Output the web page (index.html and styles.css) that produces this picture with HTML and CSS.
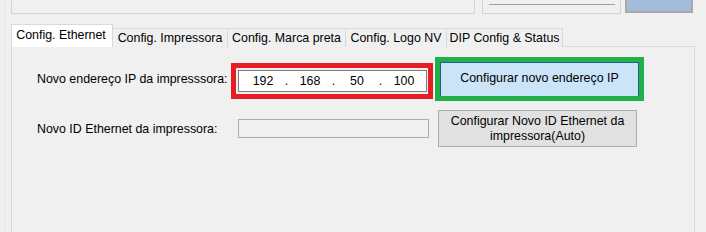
FILE: index.html
```html
<!DOCTYPE html>
<html lang="pt">
<head>
    <meta charset="UTF-8">
    <title>Config. Ethernet</title>
    <link rel="stylesheet" href="styles.css">
</head>
<body>
    <div class="window">
        <div class="top-strip">
            <div class="group-a"></div>
            <div class="group-b"><div class="group-b-field"></div></div>
            <div class="top-btn"></div>
        </div>

        <div class="tabs">
            <div class="tab active" style="width: 102px">Config. Ethernet</div>
            <div class="tab" style="width: 116px">Config. Impressora</div>
            <div class="tab" style="width: 119px">Config. Marca preta</div>
            <div class="tab" style="width: 102px">Config. Logo NV</div>
            <div class="tab" style="width: 117px">DIP Config &amp; Status</div>
        </div>

        <div class="panel">
            <div class="row row-ip">
                <div class="label">Novo endereço IP da impresssora:</div>
                <div class="mark-red">
                    <div class="ip-box">
                        <span class="seg">192</span><span class="dot">.</span>
                        <span class="seg">168</span><span class="dot">.</span>
                        <span class="seg">50</span><span class="dot">.</span>
                        <span class="seg">100</span>
                    </div>
                </div>
                <div class="mark-green">
                    <button class="btn btn-focus">Configurar novo endereço IP</button>
                </div>
            </div>

            <div class="row row-id">
                <div class="label">Novo ID Ethernet da impressora:</div>
                <div class="id-box"></div>
                <button class="btn btn-id">Configurar Novo ID Ethernet da<br>impressora(Auto)</button>
            </div>
        </div>
    </div>
</body>
</html>
```

FILE: styles.css
```css
body {
    margin: 0;
    background: #f0f0f0;
    font-family: "Liberation Sans", Arial, sans-serif;
    font-size: 12.4px;
    color: #000;
}
.window {
    width: 706px;
    height: 232px;
    overflow: hidden;
    border-left: 1px solid #f0f0f0;
    box-shadow: inset 3px 0 0 #f0f0f0, inset 4px 0 0 #e6e6e6;
}
.top-strip {
    display: flex;
    height: 14px;
}
.group-a {
    margin-left: 10px;
    width: 462px;
    border: 1px solid #d5d5d5;
    border-top: none;
}
.group-b {
    margin-left: 7px;
    width: 137px;
    border: 1px solid #d5d5d5;
    border-top: none;
}
.group-b-field {
    height: 4px;
    margin: 0 5px 0 6px;
    border-bottom: 1px solid #a0a0a0;
}
.top-btn {
    margin-left: 4px;
    width: 64px;
    height: 11px;
    background: #a3bcd9;
    border: 2px solid #a9a9a9;
    border-top: none;
}
.tabs {
    display: flex;
    align-items: flex-end;
    margin: 10px 0 0 10px;
    height: 23px;
    position: relative;
    z-index: 1;
}
.tab {
    box-sizing: border-box;
    height: 19px;
    line-height: 18px;
    text-align: center;
    background: #f0f0f0;
    border: 1px solid #d9d9d9;
    border-bottom: none;
    margin-left: -1px;
    white-space: nowrap;
}
.tab.active {
    height: 23px;
    line-height: 21px;
    margin-left: 0;
    background: #fff;
    padding-right: 2px;
}
.panel {
    box-sizing: border-box;
    margin: -1px 0 0 10px;
    width: 684px;
    height: 200px;
    border: 1px solid #d9d9d9;
    background: #f0f0f0;
    padding: 10px 0 0 25px;
}
.row {
    display: flex;
    align-items: center;
}
.row-ip {
    height: 44px;
}
.row-id {
    margin-top: 9px;
    height: 37px;
}
.label {
    width: 194px;
    white-space: nowrap;
}
.mark-red {
    border: 5px solid #e51d25;
    padding: 2px 1px 2px 2px;
    margin-top: 4px;
}
.ip-box {
    box-sizing: border-box;
    display: flex;
    align-items: center;
    width: 189px;
    height: 22px;
    background: #fff;
    border: 1px solid #7a7a7a;
    padding-left: 7px;
}
.seg {
    width: 34px;
    text-align: center;
}
.dot {
    width: 13px;
    text-align: center;
}
.mark-green {
    margin-left: 2px;
    border: 5px solid #22b04b;
    display: flex;
}
.btn {
    font-family: inherit;
    font-size: 12.4px;
    color: #000;
    padding: 0;
    box-sizing: border-box;
}
.btn-focus {
    width: 199px;
    height: 34px;
    background: #cce4f7;
    border: 1px solid #1d5f8f;
    border-bottom: none;
    padding-bottom: 4px;
}
.id-box {
    box-sizing: border-box;
    margin-left: 7px;
    width: 191px;
    height: 19px;
    border: 1px solid #adadad;
    background: #f0f0f0;
}
.btn-id {
    margin-left: 9px;
    width: 199px;
    height: 37px;
    background: #e1e1e1;
    border: 1px solid #adadad;
    line-height: 15px;
}
```
